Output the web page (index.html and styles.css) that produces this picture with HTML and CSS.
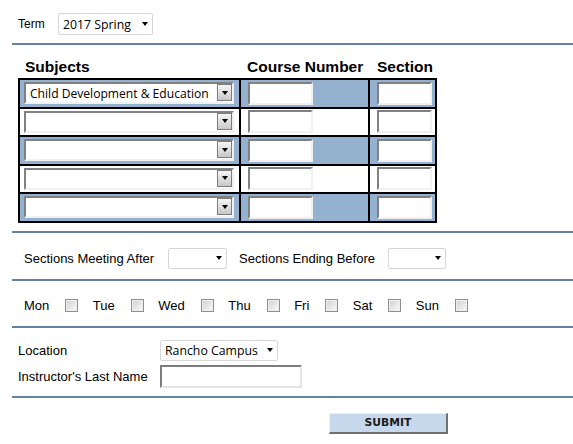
FILE: index.html
```html
<!DOCTYPE html>
<html lang="en">
<head>
<meta charset="utf-8">
<title>Class Search</title>
<link rel="stylesheet" href="styles.css">
</head>
<body>
<form class="search">
  <div class="term-row">
    <label class="term-label">Term</label>
    <span class="pick"><select class="term-select"><option>2017 Spring</option></select></span>
  </div>
  <div class="rule"></div>

  <table class="courses">
    <tr>
      <th class="h-subj">Subjects</th>
      <th class="h-course">Course Number</th>
      <th class="h-sect">Section</th>
    </tr>
    <tr class="alt">
      <td class="c-subj"><span class="classic"><select><option>Child Development &amp; Education</option></select><span class="drop"></span></span></td>
      <td class="c-course"><input class="field course-field" type="text"></td>
      <td class="c-sect"><input class="field sect-field" type="text"></td>
    </tr>
    <tr>
      <td class="c-subj"><span class="classic"><select><option></option></select><span class="drop"></span></span></td>
      <td class="c-course"><input class="field course-field" type="text"></td>
      <td class="c-sect"><input class="field sect-field" type="text"></td>
    </tr>
    <tr class="alt">
      <td class="c-subj"><span class="classic"><select><option></option></select><span class="drop"></span></span></td>
      <td class="c-course"><input class="field course-field" type="text"></td>
      <td class="c-sect"><input class="field sect-field" type="text"></td>
    </tr>
    <tr>
      <td class="c-subj"><span class="classic"><select><option></option></select><span class="drop"></span></span></td>
      <td class="c-course"><input class="field course-field" type="text"></td>
      <td class="c-sect"><input class="field sect-field" type="text"></td>
    </tr>
    <tr class="alt last">
      <td class="c-subj"><span class="classic"><select><option></option></select><span class="drop"></span></span></td>
      <td class="c-course"><input class="field course-field" type="text"></td>
      <td class="c-sect"><input class="field sect-field" type="text"></td>
    </tr>
  </table>
  <div class="rule table-rule"></div>

  <div class="time-row">
    <label class="time-label first">Sections Meeting After</label>
    <span class="pick"><select class="time-select after"><option></option></select></span>
    <label class="time-label second">Sections Ending Before</label>
    <span class="pick"><select class="time-select before"><option></option></select></span>
  </div>
  <div class="rule"></div>

  <div class="days-row">
    <label class="day">Mon</label><input class="check" type="checkbox">
    <label class="day">Tue</label><input class="check" type="checkbox">
    <label class="day">Wed</label><input class="check" type="checkbox">
    <label class="day">Thu</label><input class="check" type="checkbox">
    <label class="day">Fri</label><input class="check" type="checkbox">
    <label class="day">Sat</label><input class="check" type="checkbox">
    <label class="day">Sun</label><input class="check" type="checkbox">
  </div>
  <div class="rule"></div>

  <div class="loc-grid">
    <label class="loc-label">Location</label>
    <span class="pick loc-pick"><select class="loc-select"><option>Rancho Campus</option></select></span>
    <label class="loc-label">Instructor's Last Name</label>
    <input class="field name-field" type="text">
  </div>
  <div class="rule"></div>

  <div class="submit-row">
    <button class="submit" type="button">SUBMIT</button>
  </div>
</form>
</body>
</html>
```
FILE: styles.css
```css
* {
  box-sizing: border-box;
}

body {
  margin: 0;
  background: #fff;
  color: #000;
  font-family: "Liberation Sans", Arial, sans-serif;
  font-size: 13px;
}

.search {
  padding-left: 12px;
}

.rule {
  height: 2px;
  background: #67829e;
}

/* modern drop-downs */
.pick {
  position: relative;
  display: inline-block;
}

.pick select {
  -webkit-appearance: none;
  appearance: none;
  display: block;
  margin: 0;
  height: 22px;
  padding: 0 0 0 4px;
  border: 1px solid #d6d6d6;
  border-radius: 2px;
  background: #fff;
  color: #000;
  font-family: "Open Sans", "Noto Sans", sans-serif;
  font-size: 12.3px;
}

.pick::after {
  content: "";
  position: absolute;
  right: 5px;
  top: 50%;
  margin-top: -2px;
  border-left: 3px solid transparent;
  border-right: 3px solid transparent;
  border-top: 4px solid #000;
  pointer-events: none;
}

/* term */
.term-row {
  display: flex;
  align-items: center;
  padding: 13px 0 8px 6px;
}

.term-label {
  width: 40px;
  font-size: 12px;
}

.term-select {
  width: 95px;
}

/* course table */
.courses {
  margin: 13px 0 0 6px;
  width: 419px;
  table-layout: fixed;
  border-collapse: separate;
  border-spacing: 0;
}

.courses th {
  padding: 0 0 2px;
  font-size: 15.5px;
  font-weight: bold;
  line-height: 18px;
  text-align: left;
  vertical-align: bottom;
  white-space: nowrap;
}

.courses th.h-subj {
  width: 221px;
  padding-left: 7px;
}

.courses th.h-course {
  width: 129px;
  padding-left: 8px;
}

.courses th.h-sect {
  width: 69px;
  padding-left: 9px;
}

.courses td {
  height: 28.5px;
  padding: 0;
  border-left: 2px solid #000;
  border-top: 2px solid #000;
  vertical-align: middle;
}

.courses tr.alt td {
  background: #94b2cf;
}

.courses tr.last td {
  height: 30.5px;
  border-bottom: 2px solid #000;
}

.courses td.c-subj {
  padding-left: 4px;
}

.courses td.c-course {
  padding-left: 7px;
}

.courses td.c-sect {
  padding-left: 7px;
  border-right: 2px solid #000;
}

.classic {
  position: relative;
  display: block;
  width: 210px;
}

.classic select {
  -webkit-appearance: none;
  appearance: none;
  display: block;
  width: 210px;
  height: 22px;
  margin: 0;
  padding: 0 0 0 4px;
  border: 2px solid;
  border-color: #818181 #f1f1f1 #f1f1f1 #818181;
  border-radius: 0;
  background: #fff;
  color: #000;
  font-family: "Open Sans", "Noto Sans", sans-serif;
  font-size: 12.1px;
}

.classic .drop {
  position: absolute;
  top: 2px;
  right: 2px;
  width: 15px;
  height: 17px;
  display: flex;
  align-items: center;
  justify-content: center;
  border: 1px solid #7c7c7c;
  background: linear-gradient(#f6f6f6, #c8c8c8);
  pointer-events: none;
}

.classic .drop::before {
  content: "";
  border-left: 3.5px solid transparent;
  border-right: 3.5px solid transparent;
  border-top: 4px solid #000;
}

.field {
  display: block;
  margin: 0;
  padding: 0 3px;
  height: 23px;
  border: 2px solid;
  border-color: #818181 #f1f1f1 #f1f1f1 #818181;
  border-radius: 0;
  background: #fff;
  font-family: "Open Sans", "Noto Sans", sans-serif;
  font-size: 12px;
}

.course-field {
  width: 65px;
}

.sect-field {
  width: 55px;
}

.table-rule {
  margin-top: 8px;
}

/* time row */
.time-row {
  display: flex;
  align-items: center;
  padding: 15px 0 10px 12px;
}

.time-label.first {
  margin-right: 14px;
}

.time-label.second {
  margin: 0 13px 0 12px;
}

.pick .time-select {
  height: 21px;
}

.time-select.after {
  width: 59px;
}

.time-select.before {
  width: 58px;
}

/* days */
.days-row {
  display: flex;
  align-items: center;
  padding: 18px 0 14px 12px;
}

.day {
  line-height: 13px;
  margin-right: 16px;
}

.check {
  -webkit-appearance: none;
  appearance: none;
  width: 13px;
  height: 13px;
  margin: 0 14.5px 0 0;
  border: 1px solid #8f8f8f;
  background: linear-gradient(135deg, #cfcfcf, #f2f2f2 80%, #fbfbfb);
  box-shadow: inset 0 0 0 1px #efefef;
}

/* location */
.loc-grid {
  display: grid;
  grid-template-columns: 142px auto;
  row-gap: 4px;
  align-items: center;
  justify-items: start;
  padding: 12px 0 8px 6px;
}

.pick .loc-select {
  width: 118px;
  height: 21px;
}

.name-field {
  width: 142px;
  height: 23px;
  border-color: #7d7d7d #e4e4e4 #e4e4e4 #7d7d7d;
}

/* submit */
.submit-row {
  padding: 15px 0 0 317px;
}

.submit {
  display: block;
  width: 119px;
  height: 21px;
  padding: 0;
  border-style: solid;
  border-width: 1px 2px 2px 1px;
  border-color: #e9f0f7 #6e6e6e #6e6e6e #e9f0f7;
  background: #c5d8ec;
  color: #1b1b1b;
  font-family: "DejaVu Sans", Verdana, sans-serif;
  font-size: 10.8px;
  font-weight: bold;
}
```
